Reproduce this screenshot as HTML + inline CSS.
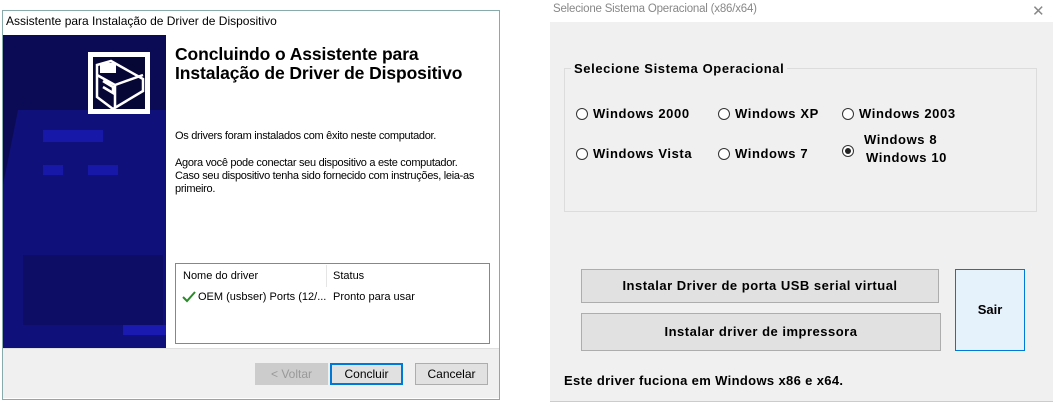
<!DOCTYPE html>
<html><head><meta charset="utf-8"><style>
*{margin:0;padding:0;box-sizing:border-box}
body{width:1053px;height:405px;background:#fff;position:relative;overflow:hidden;font-family:"Liberation Sans",sans-serif}
.a{position:absolute}
.t{font-size:12px;color:#000;white-space:nowrap}
.btn{position:absolute;background:#e1e1e1;border:1px solid #adadad;font-size:12px;text-align:center}
.r{position:absolute;width:12px;height:12px;border:1px solid #333;border-radius:50%;background:#fff}
.rl{position:absolute;font-size:13px;font-weight:bold;letter-spacing:.6px;color:#000;white-space:nowrap}
</style></head><body>
<div class="a" style="left:2px;top:10px;width:498px;height:390px;border:1px solid #8aa;background:#fff"></div>
<div class="a t" style="left:6px;top:14px;font-size:12px">Assistente para Instalação de Driver de Dispositivo</div>
<div class="a" style="left:3px;top:35px;width:163px;height:313px;background:#0a0a5a;overflow:hidden">
<svg width="163" height="313">
<rect x="0" y="0" width="163" height="313" fill="#0b0b55"/>
<path d="M15 75 L163 75 L163 313 L0 313 L0 150 Z" fill="#12128a" opacity=".7"/>
<rect x="40" y="95" width="60" height="12" fill="#1818a8"/>
<rect x="40" y="130" width="20" height="10" fill="#1818a8"/>
<rect x="85" y="130" width="30" height="10" fill="#1818a8"/>
<rect x="20" y="220" width="140" height="70" fill="#0d0d66"/>
<rect x="120" y="290" width="43" height="10" fill="#1a1ab0"/>
<rect x="85" y="17" width="62" height="62" fill="#fff"/>
<rect x="90" y="22" width="52" height="52" fill="#070735"/>
<path d="M94 30 L108 26 L140 44 L140 56 L110 74 L94 62 Z M94 40 L112 50 L112 72 M112 50 L140 40 M100 46 L110 52 L110 58 L100 52" stroke="#fff" stroke-width="2.5" fill="none"/>
<rect x="97" y="28" width="16" height="10" fill="#fff"/>
</svg></div>
<div class="a" style="left:175px;top:45px;font-size:17.5px;font-weight:bold;line-height:19px;color:#000;letter-spacing:-.1px">Concluindo o Assistente para<br>Instalação de Driver de Dispositivo</div>
<div class="a t" style="left:175px;top:130px;font-size:11px;letter-spacing:-.3px">Os drivers foram instalados com êxito neste computador.</div>
<div class="a t" style="left:175px;top:157px;font-size:11px;line-height:13px;letter-spacing:-.3px">Agora você pode conectar seu dispositivo a este computador.<br>Caso seu dispositivo tenha sido fornecido com instruções, leia-as<br>primeiro.</div>
<div class="a" style="left:175px;top:263px;width:315px;height:81px;border:1px solid #828790;background:#fff"></div>
<div class="a" style="left:326px;top:265px;width:1px;height:22px;background:#e5e5e5"></div>
<div class="a t" style="left:183px;top:270px;font-size:11px">Nome do driver</div>
<div class="a t" style="left:333px;top:270px;font-size:11px">Status</div>
<svg class="a" style="left:182px;top:291px" width="14" height="12"><path d="M1 6 L5 10 L13 1" stroke="#2a8a2a" stroke-width="2" fill="none"/></svg>
<div class="a t" style="left:198px;top:291px;font-size:11px">OEM (usbser) Ports  (12/...</div>
<div class="a t" style="left:333px;top:291px;font-size:11px">Pronto para usar</div>
<div class="a" style="left:3px;top:348px;width:496px;height:50px;background:#f0f0f0;border-top:1px solid #dfdfdf"></div>
<div class="btn" style="left:255px;top:363px;width:73px;height:22px;line-height:20px;color:#999;background:#ccc;border-color:#ccc">&lt; Voltar</div>
<div class="btn" style="left:330px;top:363px;width:73px;height:22px;line-height:18px;border:2px solid #0078d7">Concluir</div>
<div class="btn" style="left:415px;top:363px;width:73px;height:22px;line-height:20px">Cancelar</div>

<div class="a t" style="left:553px;top:3px;color:#888;font-size:11.5px;letter-spacing:-.2px">Selecione Sistema Operacional (x86/x64)</div>
<div class="a" style="left:1032px;top:2px;font-size:15px;color:#888">✕</div>
<div class="a" style="left:550px;top:22px;width:503px;height:380px;background:#f0f0f0;border-bottom:1px solid #ccc"></div>
<div class="a" style="left:564px;top:68px;width:473px;height:144px;border:1px solid #dcdcdc"></div>
<div class="a rl" style="left:571px;top:61px;background:#f0f0f0;padding:0 3px;font-size:13px">Selecione Sistema Operacional</div>
<div class="r" style="left:576px;top:108px"></div><div class="rl" style="left:593px;top:106px">Windows 2000</div>
<div class="r" style="left:718px;top:108px"></div><div class="rl" style="left:735px;top:106px">Windows XP</div>
<div class="r" style="left:842px;top:108px"></div><div class="rl" style="left:859px;top:106px">Windows 2003</div>
<div class="r" style="left:576px;top:148px"></div><div class="rl" style="left:593px;top:146px">Windows Vista</div>
<div class="r" style="left:718px;top:148px"></div><div class="rl" style="left:735px;top:146px">Windows 7</div>
<div class="r" style="left:842px;top:145px"><div style="position:absolute;left:2px;top:2px;width:6px;height:6px;border-radius:50%;background:#222"></div></div>
<div class="rl" style="left:864px;top:132px">Windows 8</div>
<div class="rl" style="left:866px;top:150px">Windows 10</div>
<div class="btn" style="left:581px;top:269px;width:358px;height:34px;line-height:32px;font-size:13px;font-weight:bold;letter-spacing:.5px">Instalar Driver de porta USB serial virtual</div>
<div class="btn" style="left:581px;top:313px;width:360px;height:38px;line-height:36px;font-size:13px;font-weight:bold;letter-spacing:.5px">Instalar driver de impressora</div>
<div class="btn" style="left:955px;top:269px;width:70px;height:82px;line-height:80px;font-size:13px;font-weight:bold;background:#e5f1fb;border-color:#0078d7">Sair</div>
<div class="rl" style="left:564px;top:373px;letter-spacing:.35px">Este driver fuciona em Windows x86 e x64.</div>
</body></html>
